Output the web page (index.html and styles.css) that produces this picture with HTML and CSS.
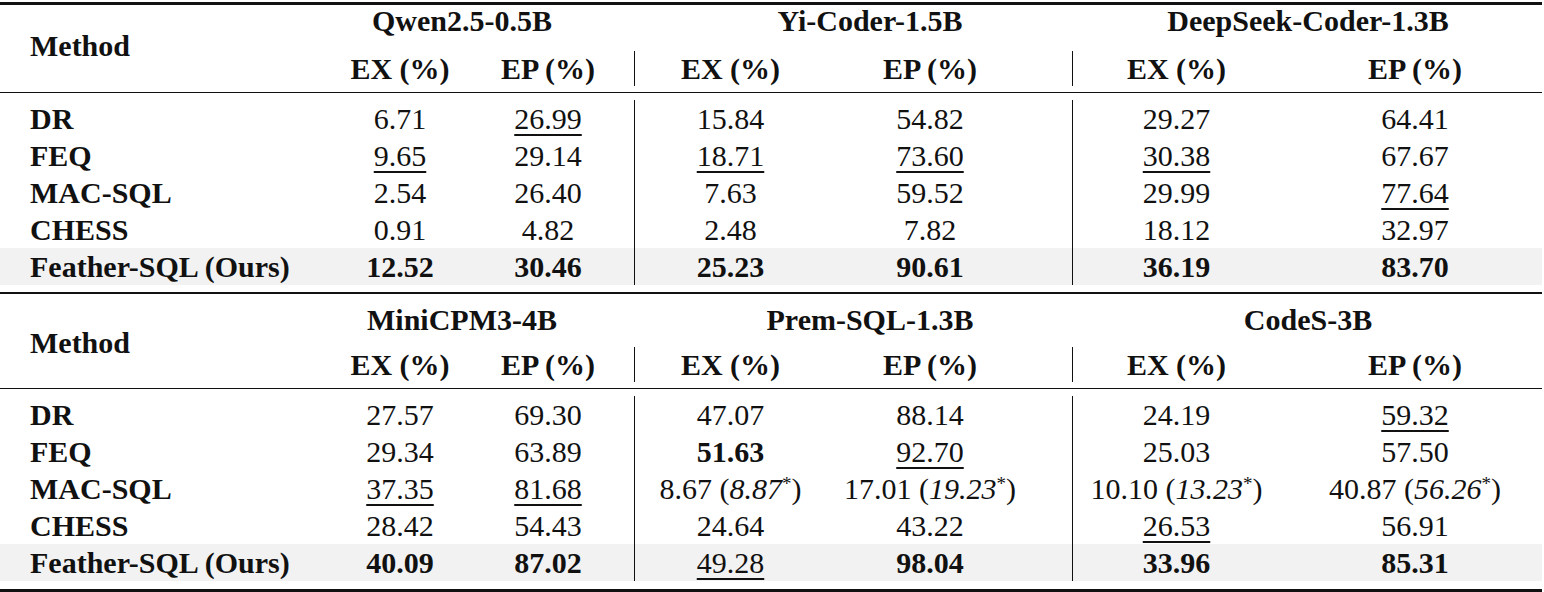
FILE: index.html
```html
<!DOCTYPE html>
<html lang="en">
  <head>
    <meta charset="UTF-8" />
    <meta name="viewport" content="width=device-width, initial-scale=1.0" />
    <title>Feather-SQL results</title>
    <link rel="stylesheet" href="styles.css">
  </head>
  <body>
    <div class="results">
      <div class="rule thick"></div>

      <!-- first group of models -->
      <div class="head">
        <div class="method">Method</div>
        <div class="group g1">Qwen2.5-0.5B</div>
        <div class="group g2">Yi-Coder-1.5B</div>
        <div class="group g3">DeepSeek-Coder-1.3B</div>
        <div class="sub">EX (%)</div>
        <div class="sub">EP (%)</div>
        <div class="sub sep">EX (%)</div>
        <div class="sub ep2">EP (%)</div>
        <div class="sub sep">EX (%)</div>
        <div class="sub ep3">EP (%)</div>
      </div>
      <div class="rule"></div>
      <div class="body">
        <div class="row">
          <div class="name">DR</div>
          <div class="val">6.71</div>
          <div class="val"><u>26.99</u></div>
          <div class="val sep">15.84</div>
          <div class="val ep2">54.82</div>
          <div class="val sep">29.27</div>
          <div class="val ep3">64.41</div>
        </div>
        <div class="row">
          <div class="name">FEQ</div>
          <div class="val"><u>9.65</u></div>
          <div class="val">29.14</div>
          <div class="val sep"><u>18.71</u></div>
          <div class="val ep2"><u>73.60</u></div>
          <div class="val sep"><u>30.38</u></div>
          <div class="val ep3">67.67</div>
        </div>
        <div class="row">
          <div class="name">MAC-SQL</div>
          <div class="val">2.54</div>
          <div class="val">26.40</div>
          <div class="val sep">7.63</div>
          <div class="val ep2">59.52</div>
          <div class="val sep">29.99</div>
          <div class="val ep3"><u>77.64</u></div>
        </div>
        <div class="row">
          <div class="name">CHESS</div>
          <div class="val">0.91</div>
          <div class="val">4.82</div>
          <div class="val sep">2.48</div>
          <div class="val ep2">7.82</div>
          <div class="val sep">18.12</div>
          <div class="val ep3">32.97</div>
        </div>
        <div class="row ours">
          <div class="name">Feather-SQL (Ours)</div>
          <div class="val"><b>12.52</b></div>
          <div class="val"><b>30.46</b></div>
          <div class="val sep"><b>25.23</b></div>
          <div class="val ep2"><b>90.61</b></div>
          <div class="val sep"><b>36.19</b></div>
          <div class="val ep3"><b>83.70</b></div>
        </div>
      </div>

      <div class="rule mid"></div>

      <!-- second group of models -->
      <div class="head second">
        <div class="method">Method</div>
        <div class="group g1">MiniCPM3-4B</div>
        <div class="group g2">Prem-SQL-1.3B</div>
        <div class="group g3">CodeS-3B</div>
        <div class="sub">EX (%)</div>
        <div class="sub">EP (%)</div>
        <div class="sub sep">EX (%)</div>
        <div class="sub ep2">EP (%)</div>
        <div class="sub sep">EX (%)</div>
        <div class="sub ep3">EP (%)</div>
      </div>
      <div class="rule"></div>
      <div class="body">
        <div class="row">
          <div class="name">DR</div>
          <div class="val">27.57</div>
          <div class="val">69.30</div>
          <div class="val sep">47.07</div>
          <div class="val ep2">88.14</div>
          <div class="val sep">24.19</div>
          <div class="val ep3"><u>59.32</u></div>
        </div>
        <div class="row">
          <div class="name">FEQ</div>
          <div class="val">29.34</div>
          <div class="val">63.89</div>
          <div class="val sep"><b>51.63</b></div>
          <div class="val ep2"><u>92.70</u></div>
          <div class="val sep">25.03</div>
          <div class="val ep3">57.50</div>
        </div>
        <div class="row">
          <div class="name">MAC-SQL</div>
          <div class="val"><u>37.35</u></div>
          <div class="val"><u>81.68</u></div>
          <div class="val sep">8.67 (<i>8.87</i><sup>*</sup>)</div>
          <div class="val ep2">17.01 (<i>19.23</i><sup>*</sup>)</div>
          <div class="val sep">10.10 (<i>13.23</i><sup>*</sup>)</div>
          <div class="val ep3">40.87 (<i>56.26</i><sup>*</sup>)</div>
        </div>
        <div class="row">
          <div class="name">CHESS</div>
          <div class="val">28.42</div>
          <div class="val">54.43</div>
          <div class="val sep">24.64</div>
          <div class="val ep2">43.22</div>
          <div class="val sep"><u>26.53</u></div>
          <div class="val ep3">56.91</div>
        </div>
        <div class="row ours">
          <div class="name">Feather-SQL (Ours)</div>
          <div class="val"><b>40.09</b></div>
          <div class="val"><b>87.02</b></div>
          <div class="val sep"><u>49.28</u></div>
          <div class="val ep2"><b>98.04</b></div>
          <div class="val sep"><b>33.96</b></div>
          <div class="val ep3"><b>85.31</b></div>
        </div>
      </div>

      <div class="rule thick bottom"></div>
    </div>
  </body>
</html>
```

FILE: styles.css
```css
* {
  margin: 0;
  padding: 0;
  box-sizing: border-box;
}

body {
  font-family: "Liberation Serif", "Times New Roman", serif;
  font-size: 30px;
  color: #111;
  background-color: #fff;
  width: 1544px;
}

.results {
  width: 1542px;
}

/* horizontal rules (booktabs style) */
.rule {
  height: 1px;
  background-color: #111;
}

.rule.thick {
  height: 3px;
  margin-top: 2px;
}

.rule.mid {
  height: 2px;
}

.rule.bottom {
  margin-top: 1px;
}

/* shared column layout */
.head,
.row {
  display: grid;
  grid-template-columns: 338px 124px 172px 192px 246px 208px 264px;
}

.head {
  grid-template-rows: 31px auto;
  padding-bottom: 6px;
  font-weight: bold;
}

.head.second {
  padding-top: 10px;
}

.method {
  grid-row: 1 / 3;
  align-self: center;
  padding-left: 30px;
}

.group {
  grid-row: 1;
  text-align: center;
  line-height: 31px;
  grid-column: span 2;
}

.group.g1 {
  grid-column: 2 / 4;
  padding-right: 48px;
}

.group.g2 {
  grid-column: 4 / 6;
  padding-left: 34px;
}

.group.g3 {
  grid-column: 6 / 8;
}

.sub {
  grid-row: 2;
  text-align: center;
  line-height: 35px;
  margin-top: 15px;
}

.second .sub {
  margin-top: 12px;
}

.sep {
  border-left: 1.5px solid #111;
}

.ep2 {
  padding-right: 38px;
}

.ep3 {
  padding-left: 6px;
}

.body {
  padding: 7px 0;
}

.row {
  height: 37px;
  line-height: 37px;
}

.name {
  font-weight: bold;
  padding-left: 30px;
}

.val {
  text-align: center;
}

.val u {
  text-decoration-thickness: 1.5px;
  text-underline-offset: 5px;
}

.val sup {
  font-size: 19px;
  line-height: 0;
  vertical-align: 9px;
}

.row.ours {
  background-color: #f2f2f2;
}
```
